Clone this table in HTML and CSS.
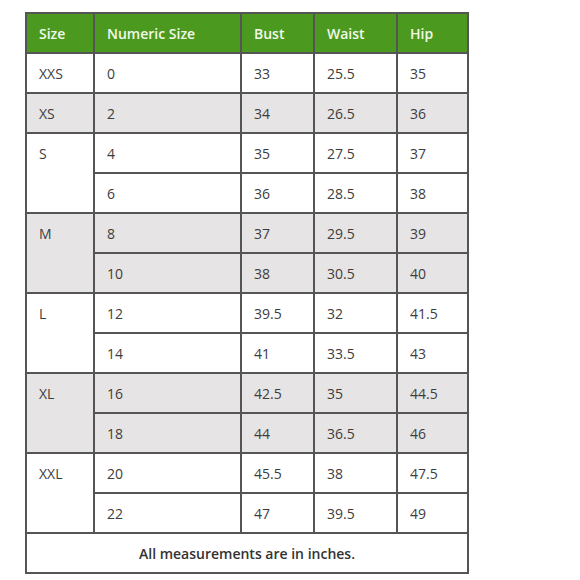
FILE: index.html
```html
<!DOCTYPE html>
<html>
<head>
<meta charset="utf-8">
<link rel="stylesheet" href="styles.css">
</head>
<body>
<table class="chart">
  <colgroup>
    <col class="c1"><col class="c2"><col class="c3"><col class="c4"><col class="c5">
  </colgroup>
  <thead>
    <tr><th>Size</th><th>Numeric Size</th><th>Bust</th><th>Waist</th><th>Hip</th></tr>
  </thead>
  <tbody>
    <tr><td>XXS</td><td>0</td><td>33</td><td>25.5</td><td>35</td></tr>
    <tr class="alt"><td>XS</td><td>2</td><td>34</td><td>26.5</td><td>36</td></tr>
    <tr><td rowspan="2">S</td><td>4</td><td>35</td><td>27.5</td><td>37</td></tr>
    <tr><td>6</td><td>36</td><td>28.5</td><td>38</td></tr>
    <tr class="alt"><td rowspan="2">M</td><td>8</td><td>37</td><td>29.5</td><td>39</td></tr>
    <tr class="alt"><td>10</td><td>38</td><td>30.5</td><td>40</td></tr>
    <tr><td rowspan="2">L</td><td>12</td><td>39.5</td><td>32</td><td>41.5</td></tr>
    <tr><td>14</td><td>41</td><td>33.5</td><td>43</td></tr>
    <tr class="alt"><td rowspan="2">XL</td><td>16</td><td>42.5</td><td>35</td><td>44.5</td></tr>
    <tr class="alt"><td>18</td><td>44</td><td>36.5</td><td>46</td></tr>
    <tr><td rowspan="2">XXL</td><td>20</td><td>45.5</td><td>38</td><td>47.5</td></tr>
    <tr><td>22</td><td>47</td><td>39.5</td><td>49</td></tr>
    <tr><td class="note" colspan="5">All measurements are in inches.</td></tr>
  </tbody>
</table>
</body>
</html>
```
FILE: styles.css
```css
html, body {
  margin: 0;
  padding: 0;
  background: #ffffff;
}
body {
  padding: 12px 0 0 25px;
  font-family: "Open Sans", "Liberation Sans", sans-serif;
}
.chart {
  border-collapse: collapse;
  table-layout: fixed;
  width: 444px;
  font-size: 14px;
  color: #3d3d3d;
}
.c1 { width: 68px; }
.c2 { width: 147px; }
.c3 { width: 73px; }
.c4 { width: 83px; }
.c5 { width: 71px; }
.chart th,
.chart td {
  border: 2px solid #555555;
  height: 40px;
  box-sizing: border-box;
  padding: 0 12px;
  text-align: left;
  vertical-align: middle;
  line-height: 19px;
}
.chart th {
  background: #4b9a1f;
  color: #f2f8ea;
  font-weight: 600;
}
.chart td {
  background: #ffffff;
}
.chart td[rowspan] {
  vertical-align: top;
  padding-top: 10px;
}
.chart .alt td {
  background: #e6e4e4;
}
.chart td.note {
  text-align: center;
  font-weight: 600;
  color: #333333;
}
```
